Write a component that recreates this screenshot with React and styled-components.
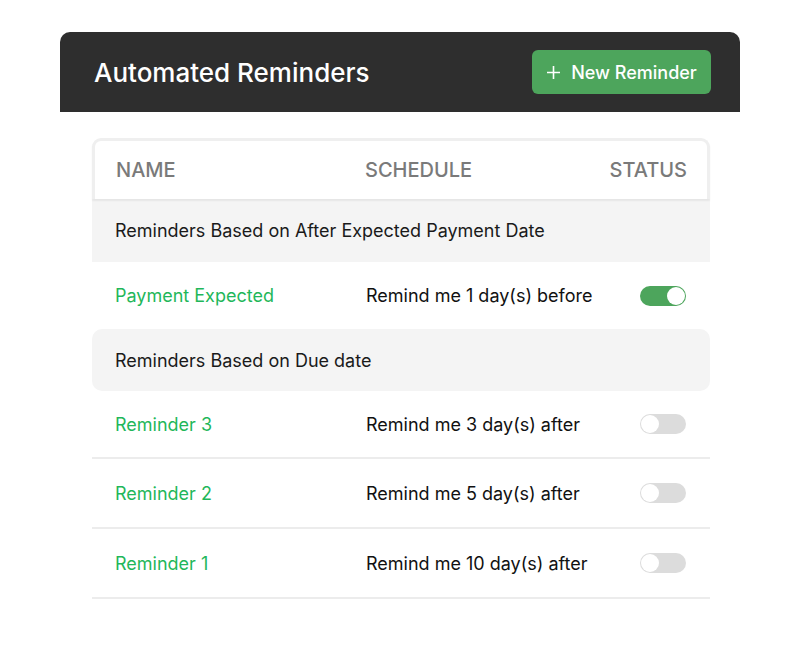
import React from 'react'
import styled, { createGlobalStyle } from 'styled-components'

const GlobalStyle = createGlobalStyle`
  body {
    margin: 0;
    background: #ffffff;
    font-family: 'Inter', 'Roboto', 'Liberation Sans', sans-serif;
  }
`

const Page = styled.div`
  width: 800px;
  height: 647px;
  padding-top: 32px;
  box-sizing: border-box;
  display: flex;
  flex-direction: column;
  align-items: center;
`

const Panel = styled.div`
  width: 680px;
  display: flex;
  flex-direction: column;
`

const TopBar = styled.div`
  height: 80px;
  background: #2e2e2e;
  border-radius: 10px 10px 0 0;
  display: flex;
  align-items: center;
  justify-content: space-between;
  padding: 0 29px 0 34px;
`

const Title = styled.h1`
  margin: 0;
  color: #ffffff;
  font-size: 26px;
  font-weight: 500;
`

const NewButton = styled.button`
  height: 44px;
  width: 179px;
  border: none;
  border-radius: 6px;
  background: #4da55c;
  color: #ffffff;
  font-family: inherit;
  font-size: 18px;
  font-weight: 500;
  display: flex;
  align-items: center;
  justify-content: center;
  gap: 10px;
  padding: 0;
  cursor: pointer;
`

const Table = styled.div`
  margin: 26px 30px 0 32px;
  display: flex;
  flex-direction: column;
`

const HeadRow = styled.div`
  height: 61px;
  box-sizing: border-box;
  border: 3px solid #efefef;
  border-bottom: none;
  border-radius: 9px 9px 0 0;
  box-shadow: 0 2px 2px rgba(0, 0, 0, 0.06);
  display: grid;
  grid-template-columns: 249px 1fr auto;
  align-items: center;
  padding: 0 20px 0 21px;
  position: relative;
  z-index: 1;
`

const HeadCell = styled.div`
  color: #7a7a7a;
  font-size: 20px;
  font-weight: 500;
`

const Group = styled.div`
  height: ${p => p.h}px;
  background: #f4f4f4;
  border-radius: ${p => (p.rounded ? '10px' : '0')};
  display: flex;
  align-items: center;
  padding-left: 23px;
  color: #1a1a1a;
  font-size: 18px;
`

const Row = styled.div`
  height: ${p => p.h}px;
  box-sizing: border-box;
  display: grid;
  grid-template-columns: 251px 1fr auto;
  align-items: center;
  padding: 0 24px 0 23px;
  border-bottom: ${p => (p.line ? '2px solid #ececec' : 'none')};
`

const Name = styled.div`
  color: #1fb75a;
  font-size: 18px;
`

const Schedule = styled.div`
  color: #111111;
  font-size: 18px;
`

const Toggle = styled.div`
  width: 46px;
  height: 20px;
  border-radius: 10px;
  box-sizing: border-box;
  background: ${p => (p.on ? '#4da55c' : '#dcdcdc')};
  display: flex;
  align-items: center;
  justify-content: ${p => (p.on ? 'flex-end' : 'flex-start')};
  padding: 1px;
`

const Knob = styled.div`
  width: 18px;
  height: 18px;
  border-radius: 50%;
  background: #ffffff;
`

const reminders = [
  { name: 'Reminder 3', when: 'Remind me 3 day(s) after' },
  { name: 'Reminder 2', when: 'Remind me 5 day(s) after' },
  { name: 'Reminder 1', when: 'Remind me 10 day(s) after' },
]

export default function App() {
  return (
    <>
      <GlobalStyle />
      <Page>
        <Panel>
          <TopBar>
            <Title>Automated Reminders</Title>
            <NewButton>
              <svg width="15" height="15" viewBox="0 0 15 15">
                <path d="M7.5 1v13M1 7.5h13" stroke="#fff" strokeWidth="1.6" />
              </svg>
              New Reminder
            </NewButton>
          </TopBar>
          <Table>
            <HeadRow>
              <HeadCell>NAME</HeadCell>
              <HeadCell>SCHEDULE</HeadCell>
              <HeadCell>STATUS</HeadCell>
            </HeadRow>
            <Group h={63}>Reminders Based on After Expected Payment Date</Group>
            <Row h={67}>
              <Name>Payment Expected</Name>
              <Schedule>Remind me 1 day(s) before</Schedule>
              <Toggle on>
                <Knob />
              </Toggle>
            </Row>
            <Group h={62} rounded>Reminders Based on Due date</Group>
            {reminders.map((r, i) => (
              <Row key={r.name} h={i === 0 ? 68 : 70} line>
                <Name>{r.name}</Name>
                <Schedule>{r.when}</Schedule>
                <Toggle>
                  <Knob />
                </Toggle>
              </Row>
            ))}
          </Table>
        </Panel>
      </Page>
    </>
  )
}
